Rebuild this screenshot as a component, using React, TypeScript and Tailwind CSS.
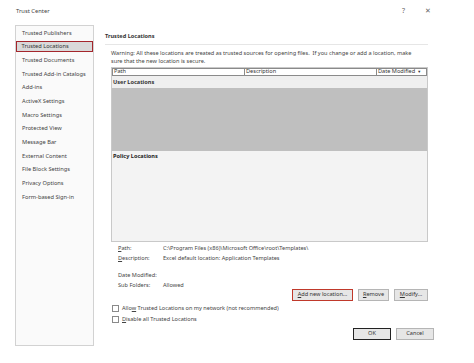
import React from "react";

const items = [
  "Trusted Publishers",
  "Trusted Locations",
  "Trusted Documents",
  "Trusted Add-in Catalogs",
  "Add-ins",
  "ActiveX Settings",
  "Macro Settings",
  "Protected View",
  "Message Bar",
  "External Content",
  "File Block Settings",
  "Privacy Options",
  "Form-based Sign-in",
];

function Btn({ children, w, red, dark }: { children: React.ReactNode; w: string; red?: boolean; dark?: boolean }) {
  const border = red
    ? "border-[1.5px] border-[#c0392b]"
    : dark
    ? "border-[1.5px] border-[#222]"
    : "border border-[#b5b5b5]";
  return (
    <div className={`${w} h-[12px] ${border} bg-[#e6e6e6] flex items-center justify-center text-[#333] leading-none`}>
      {children}
    </div>
  );
}

export default function App() {
  return (
    <div
      className="w-[474px] h-[363px] bg-white text-[#333] text-[5.6px] overflow-hidden"
      style={{ fontFamily: '"Noto Sans", "Liberation Sans", sans-serif' }}
    >
      {/* title bar */}
      <div className="h-[25px] flex items-start">
        <div className="pl-[16px] pt-[8px] leading-[7px] text-[5.8px] text-[#444]">Trust Center</div>
        <div className="ml-auto flex pt-[7px] pr-[43px] gap-[20px] text-[#666] text-[7px] leading-[8px]">
          <span>?</span>
          <span>✕</span>
        </div>
      </div>
      <div className="flex">
        {/* sidebar */}
        <div className="ml-[15px] w-[79px] h-[321px] border border-[#d2d2d2] bg-[#fafafa] flex flex-col text-[5.7px] whitespace-nowrap">
          {items.map((it, i) =>
            i === 1 ? (
              <div key={it} className="h-[13.7px] flex items-center">
                <div className="w-full h-[11.5px] bg-[#d9d9d9] border-[1.5px] border-[#a4262c] flex items-center pl-[4.5px] text-[#333]">
                  {it}
                </div>
              </div>
            ) : (
              <div key={it} className="h-[13.7px] flex items-center pl-[6px] text-[#444]">
                {it}
              </div>
            )
          )}
        </div>
        {/* main */}
        <div className="ml-[11px] w-[329px] flex flex-col">
          <div className="mt-[7px] h-[8px] leading-[8px] font-bold text-[#333]">Trusted Locations</div>
          <div className="mt-[4px] mr-[6px] h-px bg-[#e6e6e6]" />
          <div className="ml-[6px] mt-[4px] leading-[8px] text-[#444] whitespace-nowrap">
            <div>Warning: All these locations are treated as trusted sources for opening files.&nbsp; If you change or add a location, make</div>
            <div>sure that the new location is secure.</div>
          </div>
          {/* table */}
          <div className="ml-[6px] mt-[2px] w-[317px] h-[175px] border border-[#c9c9c9] flex flex-col bg-[#f3f3f3]">
            <div className="h-[8px] flex bg-white">
              <div className="w-[133px] border border-[#8a8a8a] flex items-center pl-[1px] leading-none">Path</div>
              <div className="w-[132px] border-y border-r border-[#8a8a8a] flex items-center pl-[1px] leading-none">Description</div>
              <div className="flex-1 border-y border-r border-[#8a8a8a] flex items-center pl-[1px] leading-none">
                Date Modified <span className="ml-[2px] text-[4px]">▼</span>
              </div>
            </div>
            <div className="h-[12px] bg-[#efefef] flex items-center pl-[1px] font-bold">User Locations</div>
            <div className="h-[63px] bg-[#bfbfbf]" />
            <div className="h-[10px] flex items-center pl-[1px] font-bold text-[#222]">Policy Locations</div>
            <div className="flex-1" />
          </div>
          {/* details */}
          <div className="ml-[13px] mt-[1px] text-[#444] leading-[10px]">
            <div className="flex">
              <span className="w-[45px]"><u>P</u>ath:</span>
              <span>C:\Program Files (x86)\Microsoft Office\root\Templates\</span>
            </div>
            <div className="flex">
              <span className="w-[45px]"><u>D</u>escription:</span>
              <span>Excel default location: Application Templates</span>
            </div>
            <div className="h-[7px]" />
            <div className="flex">
              <span className="w-[45px]">Date Modified:</span>
              <span></span>
            </div>
            <div className="flex">
              <span className="w-[45px]">Sub Folders:</span>
              <span>Allowed</span>
            </div>
          </div>
          <div className="-mt-[1px] mr-[6px] flex justify-end gap-[5px]">
            <Btn w="w-[61px]" red><span><u>A</u>dd new location...</span></Btn>
            <Btn w="w-[31px]"><span><u>R</u>emove</span></Btn>
            <Btn w="w-[34px]"><span><u>M</u>odify...</span></Btn>
          </div>
          <div className="ml-[7px] mt-[2px] flex flex-col text-[#444]">
            <div className="h-[11px] flex items-center gap-[3px]">
              <div className="w-[7px] h-[7px] border border-[#8a8a8a] bg-white" />
              <span>Allo<u>w</u> Trusted Locations on my network (not recommended)</span>
            </div>
            <div className="h-[11px] flex items-center gap-[3px]">
              <div className="w-[7px] h-[7px] border border-[#8a8a8a] bg-white" />
              <span><u>D</u>isable all Trusted Locations</span>
            </div>
          </div>
          <div className="mt-[3px] flex justify-end gap-[5px]">
            <Btn w="w-[38px]" dark>OK</Btn>
            <Btn w="w-[38px]">Cancel</Btn>
          </div>
        </div>
      </div>
    </div>
  );
}
